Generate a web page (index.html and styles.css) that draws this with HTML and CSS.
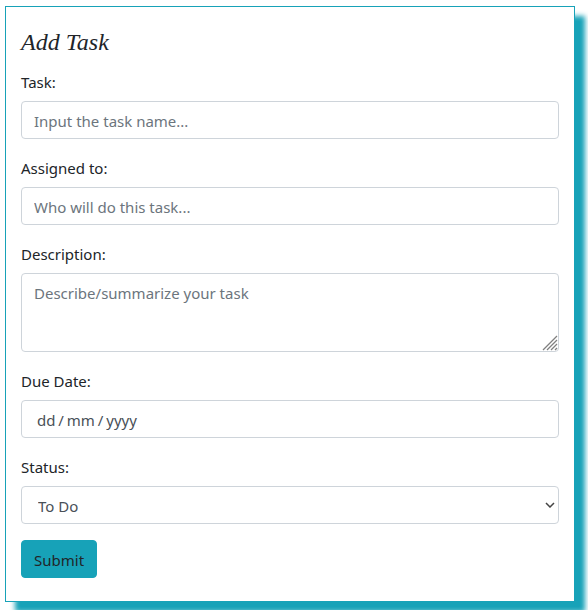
FILE: index.html
```html
<!DOCTYPE html>
<html lang="en">
<head>
<meta charset="UTF-8">
<meta name="viewport" content="width=device-width, initial-scale=1.0">
<title>Add Task</title>
<link rel="stylesheet" href="styles.css">
</head>
<body>
<form class="task-card">
  <h3 class="task-title">Add Task</h3>

  <div class="form-group">
    <label for="name">Task:</label>
    <input id="name" class="form-control" type="text" placeholder="Input the task name...">
  </div>

  <div class="form-group">
    <label for="assigned">Assigned to:</label>
    <input id="assigned" class="form-control" type="text" placeholder="Who will do this task...">
  </div>

  <div class="form-group">
    <label for="description">Description:</label>
    <div class="textarea-wrap">
      <textarea id="description" class="form-control form-textarea" placeholder="Describe/summarize your task"></textarea>
      <svg class="grip" width="16" height="16" viewBox="0 0 16 16" stroke="#808080" stroke-width="1.3" fill="none">
        <path d="M1 15L15 1M5 15L15 5M9 15L15 9M13 15L15 13"/>
      </svg>
    </div>
  </div>

  <div class="form-group">
    <label for="due">Due Date:</label>
    <input id="due" class="form-control form-date" type="text" value="dd / mm / yyyy">
  </div>

  <div class="form-group">
    <label for="status">Status:</label>
    <div class="select-wrap">
      <select id="status" class="form-control form-select">
        <option>To Do</option>
        <option>In Progress</option>
        <option>Done</option>
      </select>
      <svg class="chevron" width="10" height="6" viewBox="0 0 10 6" stroke="#444" stroke-width="1.5" fill="none">
        <path d="M1 1L5 5L9 1"/>
      </svg>
    </div>
  </div>

  <button class="btn-submit" type="button">Submit</button>
</form>
</body>
</html>
```

FILE: styles.css
```css
* {
  box-sizing: border-box;
}

html, body {
  height: 100%;
}

body {
  font-family: "Noto Sans", "Open Sans", sans-serif;
  font-size: 15px;
  line-height: 24px;
  color: #212529;
  background: #fff;
  margin: 0;
  padding: 6px 0 0 5px;
}

.task-card {
  width: 570px;
  height: 596px;
  padding: 15px;
  background: #fff;
  border: 1px solid #17a2b8;
  box-shadow: 10px 10px 5px #17a2b8;
}

.task-title {
  font-family: "Liberation Serif", serif;
  font-style: italic;
  font-weight: 400;
  font-size: 24px;
  line-height: 31px;
  margin: 5px 0 11px;
  color: #212529;
}

.form-group {
  margin-bottom: 16px;
}

label {
  display: block;
  padding-top: 1px;
  margin-bottom: 7px;
}

.form-control {
  display: block;
  width: 100%;
  height: 38px;
  padding: 7px 12px 5px;
  font-family: inherit;
  font-size: 15px;
  line-height: 24px;
  color: #495057;
  background: #fff;
  border: 1px solid #ced4da;
  border-radius: 4px;
  outline: none;
}

.form-control::placeholder {
  color: #6c757d;
}

.textarea-wrap, .select-wrap {
  position: relative;
}

.form-textarea {
  height: 79px;
  resize: none;
}

.grip {
  position: absolute;
  right: 1px;
  bottom: 1px;
}

.form-date {
  padding-left: 15px;
  word-spacing: -1px;
}

.form-select {
  appearance: none;
  padding-left: 16px;
}

.chevron {
  position: absolute;
  right: 4px;
  top: 16px;
}

.btn-submit {
  display: block;
  height: 38px;
  padding: 7px 12px 5px;
  font-family: inherit;
  font-size: 15px;
  line-height: 24px;
  color: #212529;
  background: #17a2b8;
  border: 1px solid #17a2b8;
  border-radius: 4px;
}
```
